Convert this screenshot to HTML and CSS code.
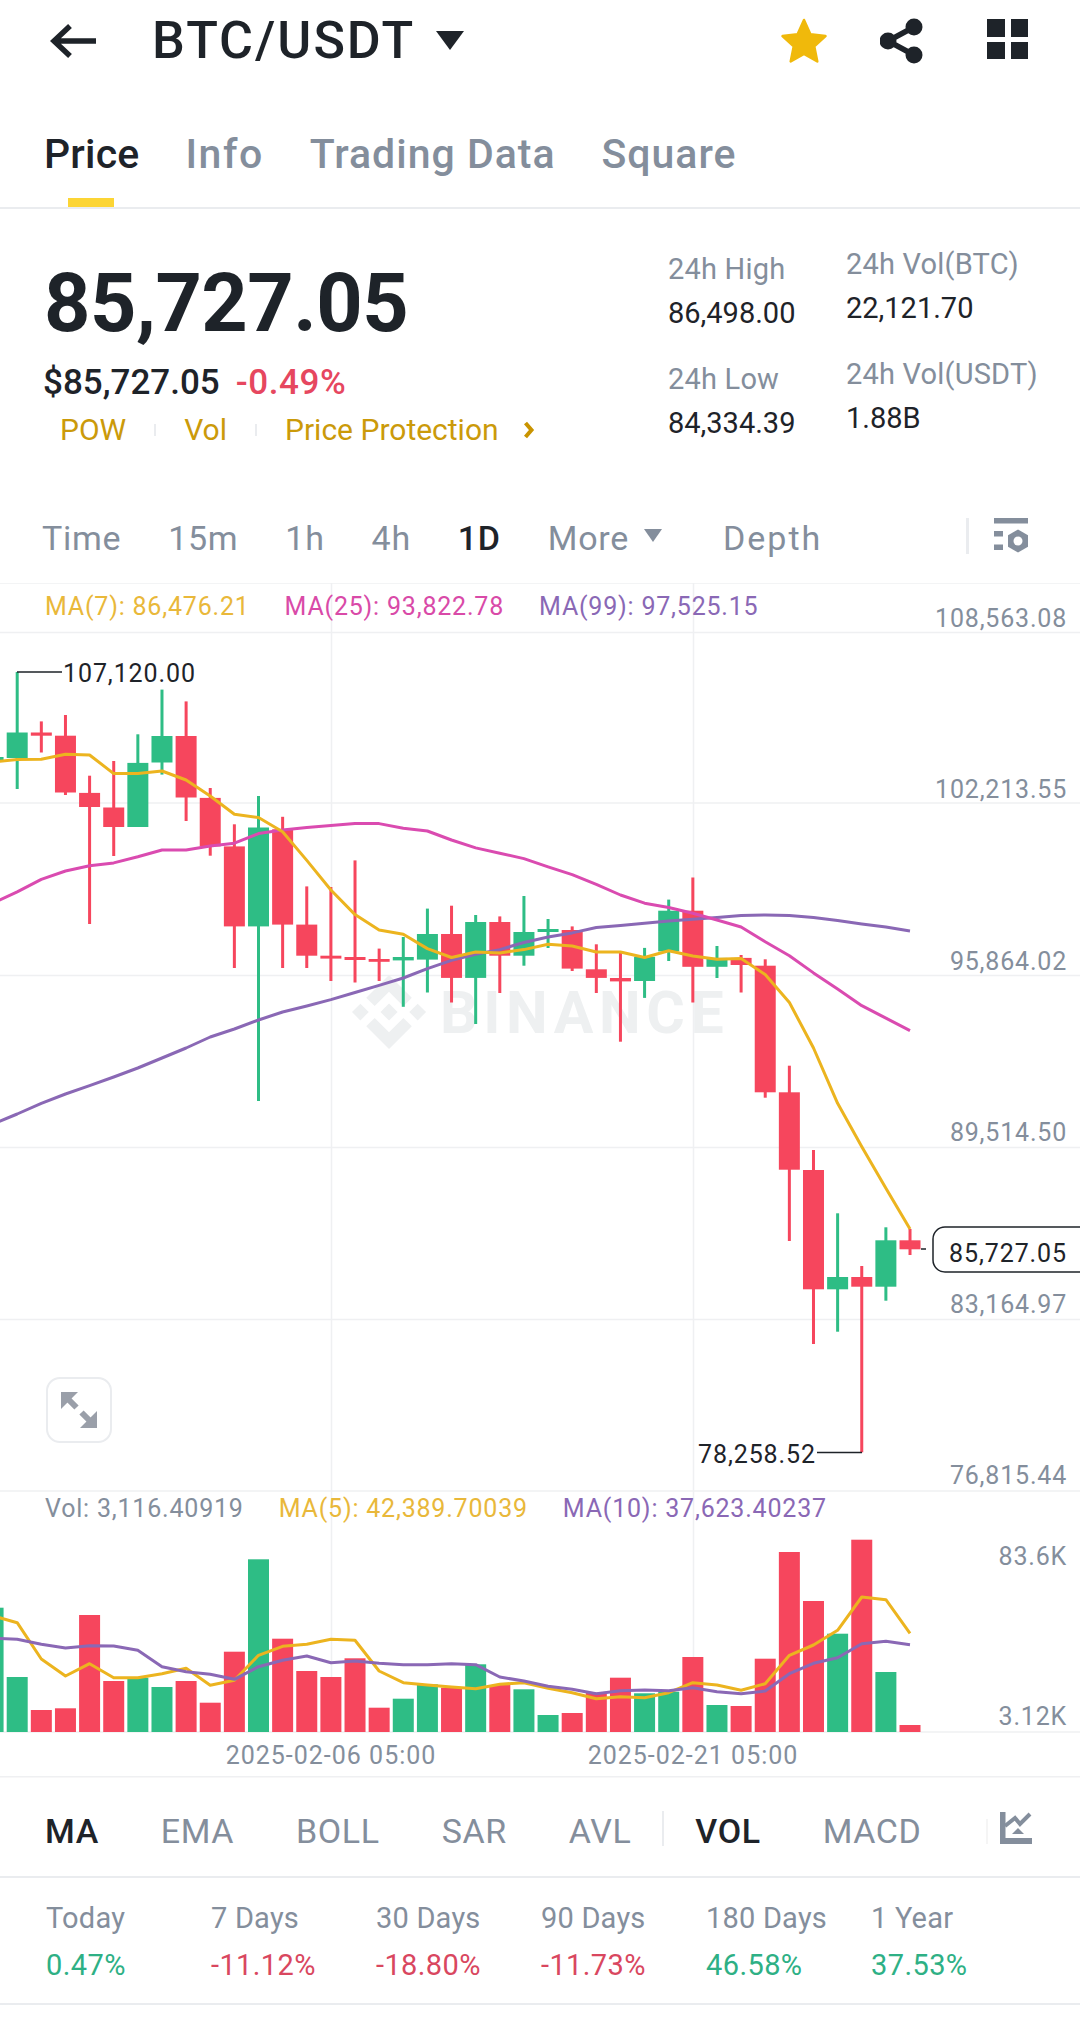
FILE: index.html
```html
<!DOCTYPE html>
<html lang="en">
<head>
  <meta charset="UTF-8" />
  <meta name="viewport" content="width=device-width, initial-scale=1.0"/>
  <title>BTC/USDT</title>
  <link rel="stylesheet" href="styles.css">
</head>
<body>
  <header class="topbar">
    <svg class="icon-back" width="46" height="36" viewBox="0 0 46 36">
      <path d="M20 3 4 18l16 15M4 18h42" fill="none" stroke="#1e2329" stroke-width="5.5"/>
    </svg>
    <h1 class="pair">BTC/USDT</h1>
    <svg class="icon-caret" width="30" height="22" viewBox="0 0 30 22">
      <path d="M1 2h28L15 21z" fill="#1e2329"/>
    </svg>
    <svg class="icon-star" width="48" height="48" viewBox="0 0 48 48">
      <path d="M24 3l6.400 14.200 15.100 1.800-11.200 10.400 3 15.100L24 37l-13.300 7.500 3-15.100L2.500 19l15.100-1.800z" fill="#f0b90b" stroke="#f0b90b" stroke-width="2.500" stroke-linejoin="round"/>
    </svg>
    <svg class="icon-share" width="44" height="48" viewBox="0 0 44 48">
      <path d="M34 10 8 24l26 14" fill="none" stroke="#1e2329" stroke-width="5.500"/>
      <circle cx="34" cy="10" r="8.500" fill="#1e2329"/>
      <circle cx="8" cy="24" r="8.500" fill="#1e2329"/>
      <circle cx="34" cy="38" r="8.500" fill="#1e2329"/>
    </svg>
    <svg class="icon-grid" width="41" height="40" viewBox="0 0 41 40">
      <path d="M0 0h18v18H0zM24 0h17v18H24zM0 23h18v17H0zM24 23h17v17H24z" fill="#1e2329"/>
    </svg>
  </header>

  <nav class="tabs">
    <a class="tab active">Price</a>
    <a class="tab tab-info">Info</a>
    <a class="tab">Trading Data</a>
    <a class="tab">Square</a>
  </nav>

  <section class="ticker">
    <div class="ticker-main">
      <div class="last-price">85,727.05</div>
      <div class="fiat-row">
        <span class="fiat">$85,727.05</span>
        <span class="change">-0.49%</span>
      </div>
      <div class="tags">
        <span>POW</span>
        <i class="tag-bar"></i>
        <span>Vol</span>
        <i class="tag-bar"></i>
        <span>Price Protection</span>
        <svg class="icon-chevron" width="12" height="18" viewBox="0 0 12 18">
          <path d="M2.500 2l6 7-6 7" fill="none" stroke="#c99400" stroke-width="4"/>
        </svg>
      </div>
    </div>
    <div class="stats">
      <div class="stat-col first">
        <div class="stat-label">24h High</div>
        <div class="stat-value">86,498.00</div>
        <div class="stat-label lower">24h Low</div>
        <div class="stat-value">84,334.39</div>
      </div>
      <div class="stat-col second">
        <div class="stat-label">24h Vol(BTC)</div>
        <div class="stat-value">22,121.70</div>
        <div class="stat-label lower">24h Vol(USDT)</div>
        <div class="stat-value">1.88B</div>
      </div>
    </div>
  </section>

  <div class="timeframes">
    <span>Time</span>
    <span>15m</span>
    <span>1h</span>
    <span>4h</span>
    <span class="on">1D</span>
    <span class="more">More
      <svg width="18" height="14" viewBox="0 0 18 14"><path d="M0 0h18L9 13z" fill="#848e9c"/></svg>
    </span>
    <span class="depth">Depth</span>
    <i class="row-sep"></i>
    <svg class="icon-settings" width="34" height="35" viewBox="0 0 34 35">
      <path d="M0 0h34v5.500H0zM0 13h9v5.500H0zM0 26.500h9V32H0z" fill="#848e9c"/>
      <path d="M24 11.500l10 5.700v11.600l-10 5.700-10-5.700V17.200z" fill="#848e9c"/>
      <circle cx="24" cy="23" r="4.500" fill="#fff"/>
    </svg>
  </div>

  <section class="chart">
    <svg id="kline" class="chart-svg" width="1080" height="1195" viewBox="0 583 1080 1195">
      <g id="grid"></g>
      <g class="watermark">
        <path transform="translate(352 975) scale(.585)" d="M38.730 53.200 63.300 28.630l24.590 24.590 14.300-14.300L63.300 0 24.420 38.880zM0 63.310l14.300-14.300 14.300 14.300-14.300 14.300zM38.730 73.410 63.300 97.980l24.590-24.580 14.310 14.290-38.900 38.910-38.910-38.880-.02-.02zM97.990 63.310l14.300-14.300 14.300 14.300-14.300 14.300zM77.860 63.300 63.300 48.740 52.540 59.500l-1.240 1.240-2.550 2.550 14.550 14.560 14.560-14.550z"/>
        <text x="440" y="1033">BINANCE</text>
      </g>
      <g id="candles"></g>
      <g id="lines"></g>
      <g id="volume" transform="translate(0 1)"></g>

      <g class="axis">
        <text x="1067" y="626.500">108,563.08</text>
        <text x="1067" y="798">102,213.55</text>
        <text x="1067" y="970">95,864.02</text>
        <text x="1067" y="1141">89,514.50</text>
        <text x="1067" y="1313">83,164.97</text>
        <text x="1067" y="1484">76,815.44</text>
        <text x="1067" y="1565">83.6K</text>
        <text x="1067" y="1725">3.12K</text>
      </g>

      <g class="dates">
        <text x="331" y="1764">2025-02-06 05:00</text>
        <text x="693" y="1764">2025-02-21 05:00</text>
      </g>

      <g class="marks">
        <path d="M17 672h45M817 1452.500h45M921 1249h5"/>
        <text x="63" y="682">107,120.00</text>
        <text x="698" y="1463">78,258.52</text>
      </g>

      <rect class="price-tag" x="933" y="1227" width="170" height="45" rx="12"/>
      <text class="price-tag-text" x="1067" y="1262">85,727.05</text>
    </svg>

    <div class="legend legend-main">
      <span class="c-yellow">MA(7): 86,476.21</span>
      <span class="c-pink">MA(25): 93,822.78</span>
      <span class="c-purple">MA(99): 97,525.15</span>
    </div>

    <button class="expand" type="button">
      <svg width="38" height="38" viewBox="0 0 38 38">
        <path d="M1 1h17L1 18zM37 37H20l17-17z" fill="#9a9fa9"/>
        <path d="M8 8l8.500 8.500M30 30l-8.500-8.500" fill="none" stroke="#9a9fa9" stroke-width="6"/>
      </svg>
    </button>

    <div class="legend legend-vol">
      <span class="c-gray">Vol: 3,116.40919</span>
      <span class="c-yellow">MA(5): 42,389.70039</span>
      <span class="c-purple">MA(10): 37,623.40237</span>
    </div>
  </section>

  <div class="indicators">
    <span class="on">MA</span>
    <span>EMA</span>
    <span>BOLL</span>
    <span>SAR</span>
    <span>AVL</span>
    <i class="ind-sep"></i>
    <span class="on">VOL</span>
    <span>MACD</span>
    <i class="ind-sep faint"></i>
    <svg class="icon-ind" width="32" height="32" viewBox="0 0 32 32">
      <path d="M0 0h5.500v26H32v6H0z" fill="#848e9c"/>
      <path d="M5 14l10-8 5 6 10-10" fill="none" stroke="#848e9c" stroke-width="4"/>
      <path d="M18 16l6 6H12z" fill="#848e9c"/>
    </svg>
  </div>

  <section class="returns">
    <div class="ret"><div class="ret-label">Today</div><div class="ret-value up">0.47%</div></div>
    <div class="ret"><div class="ret-label">7 Days</div><div class="ret-value down">-11.12%</div></div>
    <div class="ret"><div class="ret-label">30 Days</div><div class="ret-value down">-18.80%</div></div>
    <div class="ret"><div class="ret-label">90 Days</div><div class="ret-value down">-11.73%</div></div>
    <div class="ret"><div class="ret-label">180 Days</div><div class="ret-value up">46.58%</div></div>
    <div class="ret"><div class="ret-label">1 Year</div><div class="ret-value up">37.53%</div></div>
  </section>

  <script src="chart.js"></script>
</body>
</html>
```

FILE: styles.css
```css
* {
  box-sizing: border-box;
}

body {
  margin: 0;
  background: #fff;
  color: #1e2329;
  font-family: "Roboto", "Liberation Sans", sans-serif;
}

/* top bar */
.topbar {
  display: flex;
  align-items: center;
  height: 81px;
  padding-left: 50px;
}

.pair {
  margin: 0 0 0 56px;
  font-size: 52px;
  line-height: 60px;
  font-weight: 500;
  letter-spacing: 2px;
}

.icon-caret {
  margin: -2px 0 0 20px;
}

.icon-star {
  margin-left: auto;
}

.icon-share {
  margin-left: 52px;
}

.icon-grid {
  margin: -3px 52px 0 63px;
}

/* tabs */
.tabs {
  display: flex;
  gap: 46px;
  padding: 49px 0 0 44px;
  border-bottom: 2px solid #eaecef;
}

.tab {
  position: relative;
  padding-bottom: 29px;
  font-size: 41px;
  line-height: 48px;
  font-weight: 500;
  letter-spacing: 1px;
  color: #848e9c;
}

.tab.active {
  color: #1e2329;
  letter-spacing: 0.2px;
}

.tab.tab-info {
  letter-spacing: 1.500px;
}

.tab.active::after {
  content: "";
  position: absolute;
  left: 24px;
  bottom: 0;
  width: 46px;
  height: 9px;
  background: #fcd535;
}

/* price block */
.ticker {
  display: flex;
  height: 281px;
}

.ticker-main {
  width: 668px;
  padding: 50px 0 0 44px;
}

.last-price {
  font-size: 81px;
  line-height: 90px;
  font-weight: 700;
  letter-spacing: -0.5px;
}

.fiat-row {
  display: flex;
  gap: 16px;
  margin: 14px 0 0 -1px;
  font-size: 35px;
  line-height: 40px;
  font-weight: 500;
}

.change {
  color: #e6475f;
  letter-spacing: 0.6px;
}

.tags {
  display: flex;
  align-items: center;
  gap: 28px;
  margin-top: 10px;
  padding-left: 16px;
  font-size: 30px;
  line-height: 34px;
  color: #cb9a0a;
}

.tag-bar {
  width: 2px;
  height: 12px;
  background: #eaecef;
}

.icon-chevron {
  margin-left: -4px;
}

.stats {
  display: flex;
}

.stat-col.first {
  width: 178px;
  margin-top: 43px;
}

.stat-col.second {
  margin-top: 38px;
}

.stat-label {
  font-size: 29px;
  line-height: 34px;
  letter-spacing: 0.2px;
  color: #848e9c;
}

.stat-label.lower {
  margin-top: 32px;
}

.stat-value {
  margin-top: 10px;
  font-size: 29px;
  line-height: 34px;
}

/* timeframes */
.timeframes {
  display: flex;
  align-items: flex-start;
  gap: 47px;
  height: 93px;
  padding: 28px 0 0 42px;
  font-size: 34px;
  line-height: 40px;
  letter-spacing: 0.7px;
  color: #848e9c;
}

.timeframes .on {
  color: #1e2329;
  font-weight: 500;
}

.more svg {
  margin-left: 6px;
  vertical-align: 7px;
}

.depth {
  margin-left: 14px;
  letter-spacing: 2px;
}

.row-sep {
  width: 3px;
  height: 36px;
  margin-left: auto;
  background: #eaecef;
}

.icon-settings {
  margin: 0 52px 0 -22px;
}

/* chart */
.chart {
  position: relative;
  height: 1195px;
}

.chart-svg {
  display: block;
}

.legend {
  position: absolute;
  left: 45px;
  display: flex;
  gap: 35px;
  font-size: 25px;
  line-height: 30px;
  letter-spacing: 0.8px;
}

.legend-main {
  top: 9px;
}

.legend-vol {
  top: 911px;
}

.c-yellow {
  color: #e9b83a;
}

.c-pink {
  color: #d94aa8;
}

.c-purple {
  color: #8a68b5;
}

.c-gray {
  color: #848e9c;
}

.expand {
  position: absolute;
  left: 46px;
  top: 794px;
  display: flex;
  align-items: center;
  justify-content: center;
  width: 66px;
  height: 66px;
  padding: 0;
  background: #fff;
  border: 2.500px solid #eaecef;
  border-radius: 14px;
}

.watermark {
  fill: #eef0f1;
}

.watermark text {
  font-size: 59px;
  font-weight: 700;
  letter-spacing: 5.600px;
}

.axis text {
  font-size: 25px;
  letter-spacing: 0.8px;
  fill: #848e9c;
  text-anchor: end;
}

.dates text {
  font-size: 25px;
  letter-spacing: 1px;
  fill: #848e9c;
  text-anchor: middle;
}

.marks path {
  fill: none;
  stroke: #1e2329;
  stroke-width: 1.500;
}

.marks text,
.price-tag-text {
  font-size: 25px;
  letter-spacing: 0.9px;
  fill: #1e2329;
}

.price-tag {
  fill: #fff;
  stroke: #1e2329;
  stroke-width: 1.500;
}

.price-tag-text {
  text-anchor: end;
}

/* indicators */
.indicators {
  display: flex;
  align-items: flex-start;
  gap: 62px;
  height: 100px;
  padding: 33px 0 0 45px;
  border-bottom: 2px solid #eaecef;
  font-size: 34px;
  line-height: 40px;
  letter-spacing: 0.6px;
  color: #848e9c;
}

.indicators .on {
  color: #1e2329;
  font-weight: 500;
}

.ind-sep {
  width: 2px;
  height: 35px;
  margin: 0 -31px;
  background: #eaecef;
}

.ind-sep.faint {
  margin: 8px -50px 0 3px;
  height: 25px;
  background: #f5f5f5;
}

.icon-ind {
  margin-top: 1px;
}

/* returns */
.returns {
  display: grid;
  grid-template-columns: repeat(6, 165px);
  height: 127px;
  padding: 23px 0 0 46px;
  border-bottom: 2px solid #eaecef;
}

.ret-label {
  font-size: 29px;
  line-height: 34px;
  letter-spacing: 0.2px;
  color: #848e9c;
}

.ret-value {
  margin-top: 13px;
  font-size: 29px;
  line-height: 34px;
  letter-spacing: 0.4px;
}

.up {
  color: #2eb085;
}

.down {
  color: #d9475f;
}
```

FILE: chart.js
```js
const GREEN = '#2ebd85';
const RED = '#f6465d';
const YELLOW = '#ecb41f';
const PINK = '#da4bb0';
const PURPLE = '#8a68b5';

const SVG_NS = 'http://www.w3.org/2000/svg';

// color, wick top, body top, body bottom, wick bottom - starts one candle off screen
const candles = [
  ['g', 757, 757, 762, 762],
  ['g', 672, 732.5, 758, 789],
  ['r', 721.4, 732.5, 735.7, 752.5],
  ['r', 715, 735.7, 792.5, 795],
  ['r', 775.7, 792.9, 807, 924],
  ['r', 761, 807.5, 827, 856],
  ['g', 734.3, 762.9, 827, 827],
  ['g', 689.6, 736, 762.5, 774.6],
  ['r', 701.4, 736, 797.5, 821],
  ['r', 788, 797.9, 846.4, 855.7],
  ['r', 824.3, 846.4, 926.4, 968],
  ['g', 796, 827.5, 926.4, 1101],
  ['r', 816.8, 829.3, 924.6, 968],
  ['r', 886.4, 924.6, 955.7, 968],
  ['r', 887, 955.7, 958.6, 981],
  ['r', 860.4, 957, 960, 982.5],
  ['r', 948.6, 959, 961.8, 981],
  ['g', 937, 957, 960.4, 1006.8],
  ['g', 908.6, 934, 959.6, 992.5],
  ['r', 905.7, 934, 977.9, 1002.5],
  ['g', 915, 922, 977.9, 1024],
  ['r', 916.4, 922, 955.7, 993],
  ['g', 896, 932, 955.7, 965.7],
  ['g', 919, 929, 932, 948],
  ['r', 926.4, 930, 968.6, 971],
  ['r', 944.3, 969.3, 977.9, 993],
  ['r', 953, 978, 981.4, 1041.7],
  ['g', 947.9, 956.8, 981, 997.9],
  ['g', 899.6, 910.7, 951.4, 961],
  ['r', 877.5, 910.7, 966.8, 1002.5],
  ['g', 946, 957.9, 966.8, 978],
  ['r', 955, 957.9, 965, 992.5],
  ['r', 959.3, 965.7, 1092.3, 1097.7],
  ['r', 1065.7, 1092.3, 1169.7, 1241],
  ['r', 1150, 1170, 1289.3, 1344],
  ['g', 1213.3, 1277, 1289.3, 1331.7],
  ['r', 1266, 1277, 1286.7, 1452.3],
  ['g', 1227.3, 1240.3, 1286.7, 1300.7],
  ['r', 1229, 1240.3, 1249.3, 1255]
];

const ma7 = [762, 759.6, 759.3, 754.3, 755, 773.6, 773.6, 771, 780, 796, 814.3, 817.5, 831.8, 860.4, 890, 914.6, 930, 934.3, 948.6, 957.5, 952, 953, 949.6, 944.3, 946, 952, 952, 957.5, 950.7, 956, 959.3, 958.6, 974.6, 1002.5, 1048, 1103.3, 1146.7, 1188.3, 1229];
const ma25 = [903, 891.8, 879.3, 871, 865.7, 862.9, 856.8, 850, 850, 846, 843.2, 833.6, 830, 827.5, 825.4, 823.6, 823.6, 828.2, 831, 840, 847.9, 853.2, 858.6, 866.8, 874.6, 884.3, 895, 903.2, 907.5, 913.2, 920, 927, 941.8, 955.7, 972.9, 988.9, 1005.7, 1018.2, 1030.7];
const ma99 = [1124, 1114, 1103.3, 1094, 1085.7, 1077, 1068, 1058, 1048, 1037, 1029, 1020, 1012, 1006, 999.6, 992.5, 985.4, 978, 968.6, 960.4, 954.3, 949.6, 942.5, 937, 932.9, 927.5, 925.4, 923.2, 921, 919.3, 917.5, 915.4, 915, 915.4, 917.5, 920.4, 923.9, 927, 931];

// top of each volume bar, they all stand on the same line
const VOL_BASE = 1731;
const volumes = [1606.7, 1676, 1709, 1707.3, 1614, 1680, 1676.7, 1686, 1680, 1701.7, 1650.7, 1558.3, 1637.7, 1670, 1676, 1657.3, 1706.7, 1697.7, 1683.3, 1686.7, 1663.3, 1684, 1688.3, 1714, 1712, 1691.7, 1676.7, 1692.3, 1690.7, 1656, 1704, 1705, 1657.7, 1551, 1600, 1632.7, 1538.7, 1671, 1724];
const volMa5 = [1615, 1621.7, 1658, 1675, 1662.7, 1676.7, 1676.7, 1672.7, 1667.3, 1684.3, 1679.3, 1654.3, 1645.3, 1643.3, 1638.3, 1639.3, 1670, 1681.7, 1684, 1686, 1687.7, 1683.3, 1681.7, 1687.3, 1691.7, 1697.7, 1695.7, 1696.7, 1691.7, 1681.7, 1684, 1689.3, 1682.7, 1654.3, 1644, 1629.3, 1596, 1598.7, 1632.3];
const volMa10 = [1637.3, 1638.3, 1643.3, 1647, 1644.7, 1645, 1649.3, 1665.7, 1670.7, 1673.3, 1678.3, 1665.7, 1659.3, 1655, 1661.7, 1660, 1662.3, 1663.7, 1663.7, 1662.7, 1663.7, 1676, 1680, 1685.3, 1688.3, 1692.7, 1689.7, 1689, 1689.7, 1686.7, 1690.7, 1692.7, 1690, 1672.7, 1662.3, 1656.7, 1642.7, 1640.3, 1643.7];

const xOf = i => -6.93 + 24.13 * i;

function add(parent, tag, attrs) {
  const el = document.createElementNS(SVG_NS, tag);
  Object.keys(attrs).forEach(key => el.setAttribute(key, attrs[key]));
  parent.appendChild(el);
}

function drawGrid() {
  const grid = document.getElementById('grid');
  [583, 632.5, 803, 975.5, 1147.5, 1319.5, 1491, 1732, 1776.7].forEach(y => {
    add(grid, 'line', { x1: 0, x2: 1080, y1: y, y2: y, stroke: '#eff0f2', 'stroke-width': 1.5 });
  });
  [331.5, 693.5].forEach(x => {
    add(grid, 'line', { x1: x, x2: x, y1: 583, y2: 1732, stroke: '#eff0f2', 'stroke-width': 1.5 });
  });
}

function drawCandles() {
  const group = document.getElementById('candles');
  candles.forEach((c, i) => {
    const color = c[0] === 'g' ? GREEN : RED;
    const x = xOf(i);
    add(group, 'rect', { x: x - 1.5, y: c[1], width: 3, height: c[4] - c[1], fill: color });
    add(group, 'rect', { x: x - 10.5, y: c[2], width: 21, height: c[3] - c[2], fill: color });
  });
}

function drawBars() {
  const group = document.getElementById('volume');
  volumes.forEach((top, i) => {
    const color = candles[i][0] === 'g' ? GREEN : RED;
    add(group, 'rect', { x: xOf(i) - 10.5, y: top, width: 21, height: VOL_BASE - top, fill: color });
  });
}

function drawLine(parent, values, color) {
  const points = values.map((y, i) => xOf(i).toFixed(1) + ',' + y).join(' ');
  add(document.getElementById(parent), 'polyline', {
    points: points,
    fill: 'none',
    stroke: color,
    'stroke-width': 3,
    'stroke-linejoin': 'round'
  });
}

drawGrid();
drawCandles();
drawBars();
drawLine('lines', ma99, PURPLE);
drawLine('lines', ma25, PINK);
drawLine('lines', ma7, YELLOW);
drawLine('volume', volMa5, YELLOW);
drawLine('volume', volMa10, PURPLE);
```
